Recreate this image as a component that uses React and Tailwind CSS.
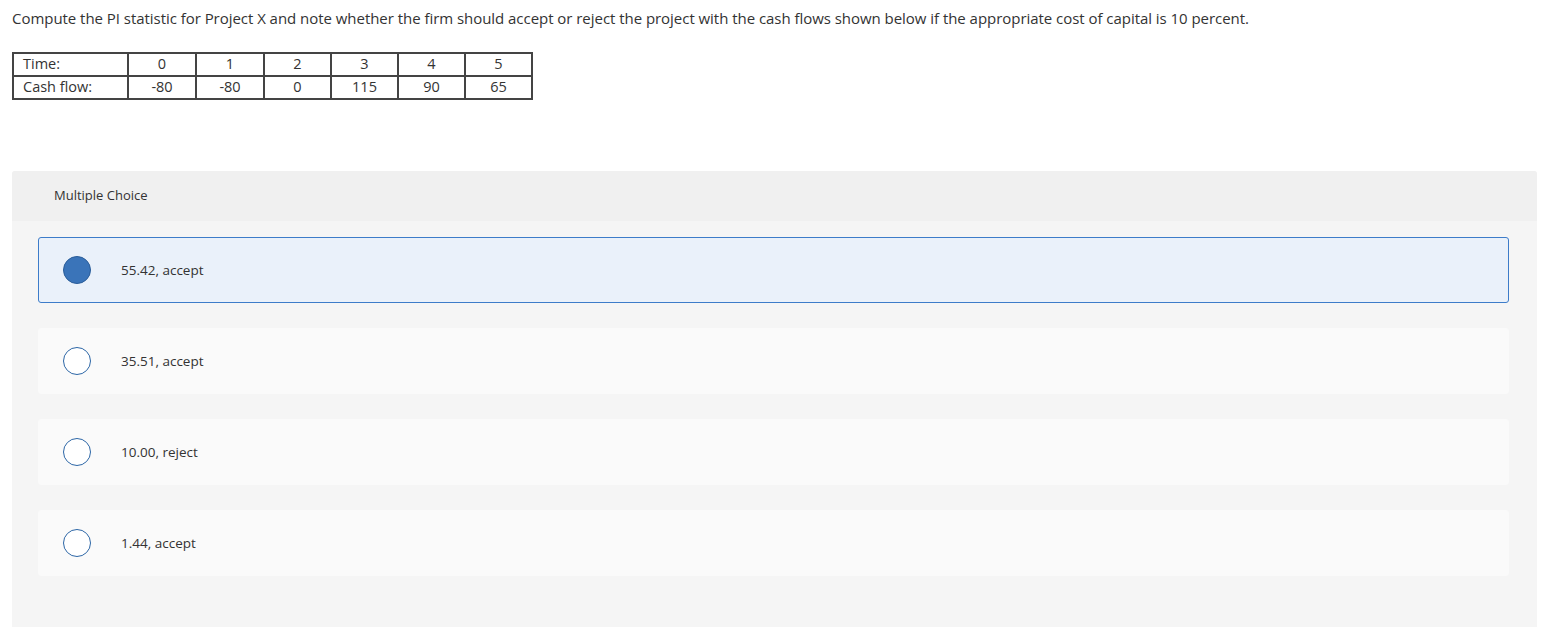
export default function App() {
  const times = ["0", "1", "2", "3", "4", "5"];
  const flows = ["-80", "-80", "0", "115", "90", "65"];
  const options = [
    { label: "55.42, accept", selected: true },
    { label: "35.51, accept" },
    { label: "10.00, reject" },
    { label: "1.44, accept" },
  ];
  const cell = "border border-[#444] h-[23px] p-0 text-center";
  return (
    <div className="w-[1565px] h-[627px] overflow-hidden bg-white text-[#333] font-['Open_Sans',sans-serif]">
      <div className="px-3 pt-[8px]">
        <p className="text-[15px] leading-5 tracking-[-0.04px]">
          Compute the PI statistic for Project X and note whether the firm should accept or reject the project with the cash flows shown below if the appropriate cost of capital is 10 percent.
        </p>
        <table className="mt-[24px] border-separate border-spacing-0 border border-[#444] text-[14.5px] leading-none">
          <tbody>
            <tr>
              <td className="border border-[#444] h-[23px] w-[115px] pl-[9px] text-left">Time:</td>
              {times.map((t, i) => (
                <td key={i} className={`${cell} ${i < 2 ? "w-[68px]" : "w-[67px]"}`}>{t}</td>
              ))}
            </tr>
            <tr>
              <td className="border border-[#444] h-[23px] pl-[9px] text-left">Cash flow:</td>
              {flows.map((t, i) => (
                <td key={i} className={cell}>{t}</td>
              ))}
            </tr>
          </tbody>
        </table>
      </div>
      <div className="ml-3 mt-[71px] w-[1525px] rounded-t-[3px] bg-[#f5f5f5] h-[460px]">
        <div className="h-[50px] bg-[#f0f0f0] rounded-t-[3px] flex items-center pl-[42px] text-[13px]">
          Multiple Choice
        </div>
        <div className="pl-[26px] pr-[28px] pt-[16px] flex flex-col gap-[25px]">
          {options.map((o, i) => (
            <div
              key={i}
              className={
                "h-[66px] rounded-[3px] flex items-center border " +
                (o.selected ? "bg-[#eaf1fa] border-[#3d7cc9]" : "bg-[#fafafa] border-[#fafafa]")
              }
            >
              <div className="ml-[24px] w-[28px] h-[28px] flex items-center justify-center">
                {o.selected ? (
                  <span className="block w-[28px] h-[28px] rounded-full bg-[#3a74b9] border border-[#2a5d99]" />
                ) : (
                  <span className="block w-[28px] h-[28px] rounded-full bg-white border-[1.5px] border-[#2c66a6]" />
                )}
              </div>
              <span className="ml-[30px] text-[13.5px]">{o.label}</span>
            </div>
          ))}
        </div>
      </div>
    </div>
  );
}
